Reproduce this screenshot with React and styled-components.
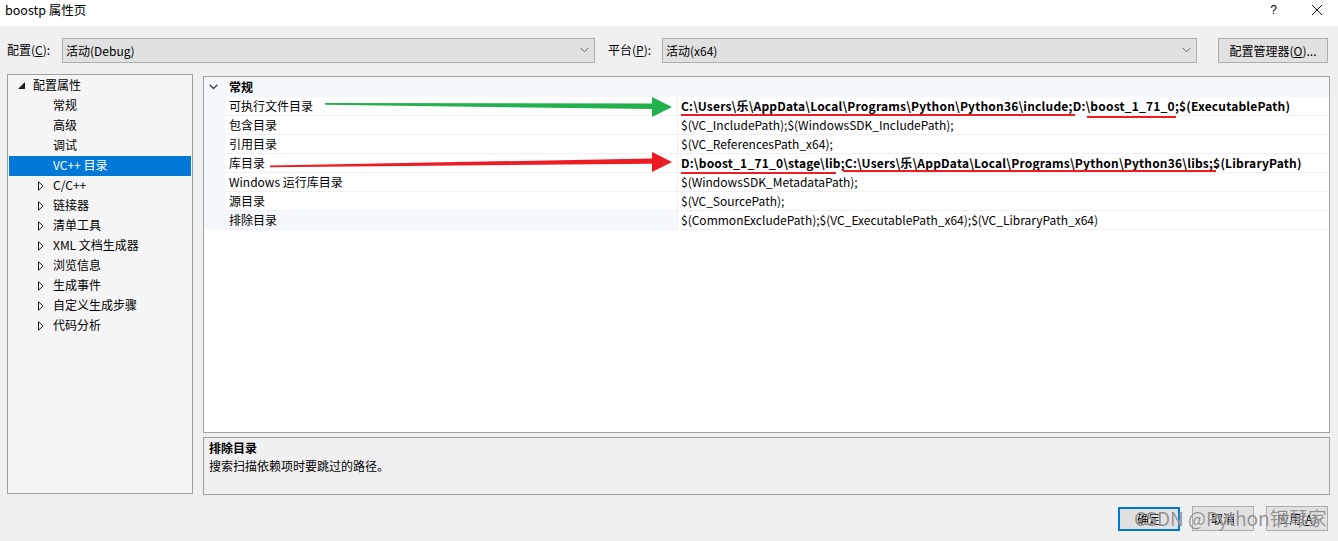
import React from "react";
import styled, { createGlobalStyle } from "styled-components";

const GlobalStyle = createGlobalStyle`
  html, body {
    margin: 0;
    padding: 0;
    background: #f0f0f0;
  }
  body {
    font-family: "Noto Sans CJK SC", "Noto Sans", sans-serif;
    font-size: 12px;
    color: #000;
  }
`;

const treeItems = [
  { label: "配置属性", level: 0, state: "open" },
  { label: "常规", level: 1 },
  { label: "高级", level: 1 },
  { label: "调试", level: 1 },
  { label: "VC++ 目录", level: 1, selected: true },
  { label: "C/C++", level: 1, state: "closed" },
  { label: "链接器", level: 1, state: "closed" },
  { label: "清单工具", level: 1, state: "closed" },
  { label: "XML 文档生成器", level: 1, state: "closed" },
  { label: "浏览信息", level: 1, state: "closed" },
  { label: "生成事件", level: 1, state: "closed" },
  { label: "自定义生成步骤", level: 1, state: "closed" },
  { label: "代码分析", level: 1, state: "closed" },
];

const gridRows = [
  {
    name: "可执行文件目录",
    value: "C:\\Users\\乐\\AppData\\Local\\Programs\\Python\\Python36\\include;D:\\boost_1_71_0;$(ExecutablePath)",
    bold: true,
  },
  { name: "包含目录", value: "$(VC_IncludePath);$(WindowsSDK_IncludePath);" },
  { name: "引用目录", value: "$(VC_ReferencesPath_x64);" },
  {
    name: "库目录",
    value: "D:\\boost_1_71_0\\stage\\lib;C:\\Users\\乐\\AppData\\Local\\Programs\\Python\\Python36\\libs;$(LibraryPath)",
    bold: true,
  },
  { name: "Windows 运行库目录", value: "$(WindowsSDK_MetadataPath);" },
  { name: "源目录", value: "$(VC_SourcePath);" },
  {
    name: "排除目录",
    value: "$(CommonExcludePath);$(VC_ExecutablePath_x64);$(VC_LibraryPath_x64)",
    selected: true,
  },
];

const Chevron = () => (
  <svg width="9" height="6" viewBox="0 0 9 6">
    <path d="M0.5 0.8 L4.5 4.8 L8.5 0.8" fill="none" stroke="#606060" strokeWidth="1" />
  </svg>
);

const App = () => {
  return (
    <Window>
      <GlobalStyle />
      <TitleBar>
        <span>boostp 属性页</span>
        <TitleControls>
          <span>?</span>
          <svg width="12" height="12" viewBox="0 0 12 12">
            <path d="M1 1 L11 11 M11 1 L1 11" stroke="#111" strokeWidth="1" />
          </svg>
        </TitleControls>
      </TitleBar>

      <Body>
        <ConfigRow>
          <Label width={55}>
            配置(<u>C</u>):
          </Label>
          <Combo width={533}>
            <span>活动(Debug)</span>
            <Chevron />
          </Combo>
          <Label width={54} gap={13}>
            平台(<u>P</u>):
          </Label>
          <Combo width={535}>
            <span>活动(x64)</span>
            <Chevron />
          </Combo>
          <Button width={110} gap={21}>
            配置管理器(<u>O</u>)...
          </Button>
        </ConfigRow>

        <Main>
          <Tree>
            {treeItems.map((item) => (
              <TreeRow key={item.label} level={item.level} selected={item.selected}>
                <Expander>
                  {item.state === "open" && (
                    <svg width="7" height="7" viewBox="0 0 7 7">
                      <path d="M7 0 L7 7 L0 7 Z" fill="#1e1e1e" />
                    </svg>
                  )}
                  {item.state === "closed" && (
                    <svg width="6" height="10" viewBox="0 0 6 10">
                      <path d="M0.5 0.8 L5.2 5 L0.5 9.2 Z" fill="none" stroke="#1e1e1e" strokeWidth="1" />
                    </svg>
                  )}
                </Expander>
                {item.label}
              </TreeRow>
            ))}
          </Tree>

          <RightColumn>
            <Grid>
              <GroupHeader>
                <Gutter>
                  <svg width="9" height="6" viewBox="0 0 9 6">
                    <path d="M0.7 0.7 L4.5 4.5 L8.3 0.7" fill="none" stroke="#444" strokeWidth="1.4" />
                  </svg>
                </Gutter>
                <b>常规</b>
              </GroupHeader>
              {gridRows.map((row) => (
                <GridRow key={row.name}>
                  <Gutter />
                  <NameCell selected={row.selected}>{row.name}</NameCell>
                  <ValueCell bold={row.bold}>{row.value}</ValueCell>
                </GridRow>
              ))}
            </Grid>
            <Description>
              <b>排除目录</b>
              <span>搜索扫描依赖项时要跳过的路径。</span>
            </Description>
          </RightColumn>
        </Main>

        <Footer>
          <Button width={62} primary>
            确定
          </Button>
          <Button width={62}>取消</Button>
          <Button width={62}>
            应用(<u>A</u>)
          </Button>
        </Footer>
      </Body>

      <Annotations width="1338" height="541" viewBox="0 0 1338 541">
        {/* green arrow */}
        <path d="M325 103 L652 103.5 L652 97 L672 107 L652 117 L652 109 L325 104.8 Z" fill="#22b14c" />
        {/* red arrow */}
        <path d="M270 165.5 L652 158.5 L652 152 L672 162 L652 172 L652 163.8 L270 167.3 Z" fill="#ed1c24" />
        {/* underlines */}
        <rect x="681" y="114" width="394" height="2" fill="#ed1c24" />
        <rect x="1087" y="116" width="89" height="2" fill="#ed1c24" />
        <rect x="681" y="172" width="155" height="2" fill="#ed1c24" />
        <rect x="843" y="170" width="373" height="2" fill="#ed1c24" />
      </Annotations>

      <Watermark>CSDN @Python钢琴家</Watermark>
    </Window>
  );
};

const Window = styled.div`
  position: relative;
  width: 1338px;
  height: 541px;
  display: flex;
  flex-direction: column;
  overflow: hidden;
`;

const TitleBar = styled.div`
  height: 26px;
  flex: none;
  background: #fff;
  display: flex;
  justify-content: space-between;
  align-items: flex-start;
  padding: 2px 15px 0 5px;
  box-sizing: border-box;
  font-size: 12.5px;
  line-height: 16px;
`;

const TitleControls = styled.div`
  display: flex;
  align-items: center;
  gap: 34px;
  height: 16px;
  font-family: "Liberation Sans", sans-serif;
  font-size: 12px;
`;

const Body = styled.div`
  flex: 1;
  display: flex;
  flex-direction: column;
  padding: 12px 10px 0 7px;
  background: #f0f0f0;
`;

const ConfigRow = styled.div`
  display: flex;
  align-items: center;
  height: 25px;
`;

const Label = styled.div`
  width: ${(p) => p.width}px;
  margin-left: ${(p) => p.gap || 0}px;
  flex: none;
  white-space: nowrap;
  padding-bottom: 2px;
`;

const Combo = styled.div`
  width: ${(p) => p.width}px;
  height: 25px;
  box-sizing: border-box;
  flex: none;
  display: flex;
  align-items: center;
  justify-content: space-between;
  padding: 0 5px 1px 3px;
  background: #e1e1e1;
  border: 1px solid #adadad;
`;

const Button = styled.div`
  width: ${(p) => p.width}px;
  height: ${(p) => (p.primary ? 24 : 25)}px;
  margin-left: ${(p) => p.gap || 0}px;
  box-sizing: border-box;
  flex: none;
  display: flex;
  align-items: center;
  justify-content: center;
  padding-bottom: 1px;
  background: #e1e1e1;
  border: ${(p) => (p.primary ? "2px solid #0078d7" : "1px solid #adadad")};
  white-space: nowrap;
`;

const Main = styled.div`
  display: flex;
  margin-top: 11px;
  margin-right: -2px;
`;

const Tree = styled.div`
  width: 186px;
  height: 420px;
  box-sizing: border-box;
  flex: none;
  border: 1px solid #a0a0a0;
  background: #f5f5f5;
  padding: 1px 1px 0;
`;

const TreeRow = styled.div`
  height: 20px;
  box-sizing: border-box;
  display: flex;
  align-items: center;
  padding-left: ${(p) => 9 + p.level * 20}px;
  padding-bottom: 3px;
  background: ${(p) => (p.selected ? "#0078d7" : "transparent")};
  color: ${(p) => (p.selected ? "#fff" : "#000")};
  white-space: nowrap;
`;

const Expander = styled.span`
  width: 15px;
  flex: none;
  display: flex;
  align-items: center;
  padding-top: 2px;
`;

const RightColumn = styled.div`
  flex: 1;
  margin-left: 10px;
  padding-top: 2px;
  display: flex;
  flex-direction: column;
  gap: 4px;
`;

const Grid = styled.div`
  height: 357px;
  box-sizing: border-box;
  border: 1px solid #a0a0a0;
  background: #fff;
`;

const GroupHeader = styled.div`
  height: 20px;
  display: flex;
  align-items: center;
  background: #f4f7fb;
  b {
    font-weight: 700;
    padding-left: 4px;
    padding-bottom: 1px;
  }
`;

const Gutter = styled.div`
  width: 21px;
  align-self: stretch;
  flex: none;
  display: flex;
  align-items: center;
  justify-content: center;
  padding-right: 3px;
  box-sizing: border-box;
  background: #f4f7fb;
`;

const GridRow = styled.div`
  height: 19px;
  display: flex;
`;

const NameCell = styled.div`
  width: 452px;
  flex: none;
  padding: 0 0 2px 4px;
  box-sizing: border-box;
  display: flex;
  align-items: center;
  border-bottom: 1px solid #f0f0f0;
  background: ${(p) => (p.selected ? "#f4f7fb" : "#fff")};
  white-space: nowrap;
`;

const ValueCell = styled.div`
  flex: 1;
  padding: 0 0 2px 3px;
  display: flex;
  align-items: center;
  border-left: 1px solid #f0f0f0;
  border-bottom: 1px solid #f0f0f0;
  font-weight: ${(p) => (p.bold ? 700 : 400)};
  letter-spacing: ${(p) => (p.bold ? "0.2px" : "0")};
  white-space: nowrap;
`;

const Description = styled.div`
  height: 58px;
  box-sizing: border-box;
  border: 1px solid #a0a0a0;
  background: #f0f0f0;
  padding: 1px 5px;
  display: flex;
  flex-direction: column;
  line-height: 18px;
  b {
    font-weight: 700;
  }
`;

const Footer = styled.div`
  display: flex;
  justify-content: flex-end;
  gap: 12px;
  margin-top: 11px;
  align-items: center;
`;

const Annotations = styled.svg`
  position: absolute;
  left: 0;
  top: 0;
  pointer-events: none;
`;

const Watermark = styled.div`
  position: absolute;
  z-index: 2;
  left: 1134px;
  top: 506px;
  font-family: "Noto Sans CJK SC", sans-serif;
  font-size: 19px;
  line-height: 24px;
  color: rgba(110, 110, 110, 0.75);
  text-shadow: 0 0 1px rgba(255, 255, 255, 0.9);
  white-space: nowrap;
  pointer-events: none;
`;

export default App;
